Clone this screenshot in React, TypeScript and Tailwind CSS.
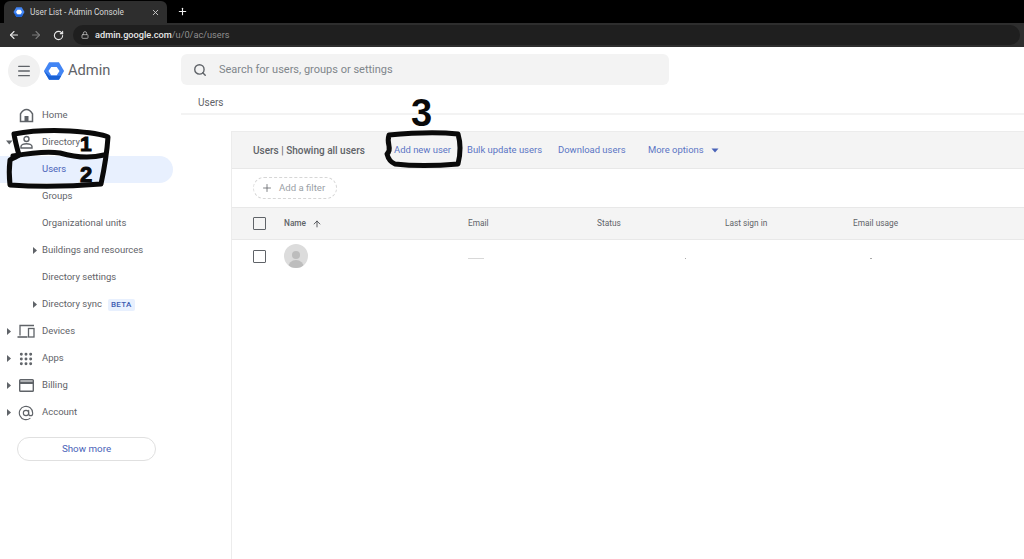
import React from "react";
import { ArrowLeft, ArrowRight, RotateCw, Lock, X, Plus, Menu, Search, ArrowUp, AtSign, Grip } from "lucide-react";

const Caret = ({ className = "", down = false }: { className?: string; down?: boolean }) => (
  <svg width="7" height="7" viewBox="0 0 7 7" className={className}>
    <path d={down ? "M0 1.5 H6.5 L3.25 5.5 Z" : "M1 0 L5 3.5 L1 7 Z"} fill="#5f6368" />
  </svg>
);

const Logo = ({ size }: { size: number }) => (
  <svg width={size} height={size} viewBox="0 0 24 24">
    <path d="M6.6 2.5h10.8l5.6 9.5-5.6 9.5H6.6L1 12z" fill="#4285f4" />
    <path d="M1 12l5.6 9.5h10.8l2.6-4.4H7z" fill="#1a62d6" />
    <path d="M9 7.5h6l3 4.5-3 4.5H9L6 12z" fill="#fff" />
  </svg>
);

const HomeIcon = () => (
  <svg width="15" height="15" viewBox="0 0 15 15" fill="none" stroke="#5f6368" strokeWidth="1.5">
    <path d="M1.5 13.5V5.8C3 3.2 5 1.5 7.5 1.5S12 3.2 13.5 5.8V13.5Z" />
    <rect x="5.5" y="8" width="4" height="5.5" fill="#5f6368" stroke="none" />
  </svg>
);

const PersonIcon = () => (
  <svg width="15" height="15" viewBox="0 0 15 15" fill="none" stroke="#5f6368" strokeWidth="1.4">
    <circle cx="7.5" cy="4" r="2.5" />
    <path d="M2 13V11.5C2 9.8 5 8.8 7.5 8.8S13 9.8 13 11.5V13Z" />
  </svg>
);

const Devices = () => (
  <svg width="18" height="15" viewBox="0 0 18 15" fill="none" stroke="#5f6368" strokeWidth="1.3">
    <path d="M3 11.5V1.5h14" />
    <path d="M0.5 13h10" strokeWidth="1.6" />
    <rect x="11.5" y="4.5" width="5.5" height="8.5" />
  </svg>
);

const Billing = () => (
  <svg width="15" height="13" viewBox="0 0 15 13" fill="none" stroke="#5f6368" strokeWidth="1.4">
    <rect x="0.7" y="0.7" width="13.6" height="11.6" rx="0.8" />
    <rect x="1" y="2.5" width="13" height="2.5" fill="#5f6368" stroke="none" />
  </svg>
);

type Row = { label: string; icon?: React.ReactNode; caret?: boolean; down?: boolean; sub?: boolean; active?: boolean; beta?: boolean };

const rows: Row[] = [
  { label: "Home", icon: <HomeIcon /> },
  { label: "Directory", icon: <PersonIcon />, caret: true, down: true },
  { label: "Users", sub: true, active: true },
  { label: "Groups", sub: true },
  { label: "Organizational units", sub: true },
  { label: "Buildings and resources", sub: true, caret: true },
  { label: "Directory settings", sub: true },
  { label: "Directory sync", sub: true, caret: true, beta: true },
  { label: "Devices", icon: <Devices />, caret: true },
  { label: "Apps", icon: <Grip size={16} strokeWidth={2.4} color="#5f6368" />, caret: true },
  { label: "Billing", icon: <Billing />, caret: true },
  { label: "Account", icon: <AtSign size={16} strokeWidth={1.7} color="#5f6368" />, caret: true },
];

const NavRow = ({ r }: { r: Row }) => (
  <div className={`relative flex h-[27px] items-center pl-[42px] text-[9.5px] ${r.active ? "mr-[8px] rounded-r-full bg-[#e8f0fe] text-[#4a63b8]" : "text-[#5f6368]"}`}>
    {r.caret && <Caret down={r.down} className={`absolute top-[10px] ${r.sub ? "left-[32px]" : "left-[6px]"}`} />}
    {r.icon && <span className="absolute left-[17px] top-0 flex h-[27px] w-[18px] items-center justify-center">{r.icon}</span>}
    <span>{r.label}</span>
    {r.beta && <span className="ml-[6px] rounded-[2px] bg-[#e8f0fe] px-[3px] py-[1px] text-[8px] font-medium leading-[10px] tracking-[0.3px] text-[#3c5bb0]">BETA</span>}
  </div>
);

const Box = () => <span className="block h-[13px] w-[13px] rounded-[1px] border-[1.5px] border-[#5f6368]" />;

const Scribbles = () => (
  <svg width="1024" height="559" viewBox="0 0 1024 559" fill="none" stroke="#0a0a0a" strokeWidth="5" strokeLinecap="round" strokeLinejoin="round" className="pointer-events-none absolute left-0 top-0">
    <path d="M14 134C30 131 50 130 70 131C85 132 100 133 108 137C107 152 104 170 101 184C75 186 40 187 10 185C9 176 9 168 10 160C14 157 18 157 19 155C17 148 15 140 14 134Z" />
    <path d="M13 156C30 153 48 151 60 153C74 157 88 159 104 155" />
    <path d="M389 135C410 133 440 132 458 134C461 144 460 156 458 164C435 166 412 166 395 164C390 162 388 158 387 154C389 152 390 150 389 146C388 142 388 138 389 135Z" />
  </svg>
);

const Digit = ({ n, className }: { n: string; className: string }) => (
  <span className={`pointer-events-none absolute font-['Liberation_Sans',sans-serif] font-bold text-[#0a0a0a] ${className}`}>{n}</span>
);

export default function App() {
  return (
    <div className="relative flex h-[559px] w-[1024px] flex-col overflow-hidden bg-white font-['Roboto',sans-serif]">
      {/* browser chrome */}
      <div className="flex h-[23px] shrink-0 items-end bg-black pl-[4px]">
        <div className="flex h-[22px] w-[163px] items-center rounded-t-[6px] bg-[#2e2e2e] pl-[9px] pr-[7px]">
          <Logo size={12} />
          <span className="ml-[5px] flex-1 whitespace-nowrap text-[8.2px] text-[#d8d8d8]">User List - Admin Console</span>
          <X size={9} strokeWidth={2.4} color="#d0d0d0" />
        </div>
        <Plus size={11} strokeWidth={2.4} color="#f0f0f0" className="mb-[6px] ml-[10px]" />
      </div>
      <div className="flex h-[24px] shrink-0 items-center bg-[#2e2e2e] pl-[8px] pr-[4px]">
        <ArrowLeft size={12} strokeWidth={2.2} color="#e8e8e8" />
        <ArrowRight size={12} strokeWidth={2.2} color="#7a7a7a" className="ml-[10px]" />
        <RotateCw size={11} strokeWidth={2.4} color="#e8e8e8" className="ml-[11px]" />
        <div className="ml-[9px] flex h-[20px] flex-1 items-center rounded-full bg-[#1f1f1f] pl-[8px]">
          <Lock size={8} strokeWidth={2.4} color="#bdbdbd" />
          <span className="ml-[6px] text-[9.2px] font-medium text-[#e8e8e8]">admin.google.com</span>
          <span className="text-[9.2px] text-[#8f8f8f]">/u/0/ac/users</span>
        </div>
      </div>

      <div className="flex min-h-0 flex-1">
        {/* sidebar */}
        <div className="w-[181px] shrink-0">
          <div className="flex h-[47px] items-center pl-[8px]">
            <div className="flex h-[32px] w-[32px] items-center justify-center rounded-full bg-[#f1f1f1]">
              <Menu size={16} strokeWidth={2} color="#5f6368" />
            </div>
            <span className="ml-[3px]"><Logo size={22} /></span>
            <span className="ml-[3px] text-[14.7px] text-[#5f6368]">Admin</span>
          </div>
          <div className="mt-[8px]">
            {rows.map((r) => (
              <NavRow key={r.label} r={r} />
            ))}
          </div>
          <div className="ml-[17px] mt-[11px] flex h-[24px] w-[139px] items-center justify-center rounded-full border border-[#e0e0e0] text-[9.8px] text-[#4a63b8]">
            Show more
          </div>
        </div>

        {/* main */}
        <div className="flex min-w-0 flex-1 flex-col">
          <div className="flex h-[44px] shrink-0 items-start pt-[7px]">
            <div className="flex h-[31px] w-[488px] items-center rounded-[6px] bg-[#f3f3f3] pl-[12px]">
              <Search size={14} strokeWidth={2.4} color="#5f6368" />
              <span className="ml-[12px] mt-[2px] text-[11px] text-[#80868b]">Search for users, groups or settings</span>
            </div>
          </div>
          <div className="flex h-[24px] shrink-0 items-center border-b-2 border-[#f3f3f3] pl-[17px] text-[10px] text-[#5f6368]">Users</div>

          <div className="flex min-h-0 flex-1 flex-col pl-[50px] pt-[16px]">
            <div className="flex-1 border-l border-t border-[#ececec]">
              <div className="flex h-[37px] items-center border-b border-[#e8e8e8] bg-[#f4f4f4] pl-[21px] text-[9.45px] text-[#5b74c4]">
                <span className="w-[141px] text-[10px] font-medium text-[#5f6368]">Users <span className="font-normal">|</span> Showing all users</span>
                <span className="w-[73px]">Add new user</span>
                <span className="w-[91px]">Bulk update users</span>
                <span className="w-[90px]">Download users</span>
                <span>More options</span>
                <svg width="8" height="5" viewBox="0 0 8 5" className="ml-[7px]"><path d="M0.5 0.5h7L4 4.5z" fill="#4a63b8" /></svg>
              </div>
              <div className="flex h-[38px] items-center pl-[21px]">
                <div className="flex h-[22px] w-[84px] items-center rounded-full border border-dashed border-[#d6d6d6] pl-[7px] text-[9.6px] text-[#9aa0a6]">
                  <Plus size={12} strokeWidth={1.6} color="#5f6368" />
                  <span className="ml-[6px]">Add a filter</span>
                </div>
              </div>
              <div className="flex h-[33px] items-center border-y border-[#e8e8e8] bg-[#f4f4f4] text-[8.3px] text-[#5f6368]">
                <span className="ml-[21px] w-[31px]"><Box /></span>
                <span className="font-medium">Name</span>
                <ArrowUp size={10} strokeWidth={2} color="#3c4043" className="ml-[6px]" />
                <span className="ml-[146px] w-[129px]">Email</span>
                <span className="w-[128px]">Status</span>
                <span className="w-[128px]">Last sign in</span>
                <span>Email usage</span>
              </div>
              <div className="flex h-[32px] items-center">
                <span className="ml-[21px] w-[31px]"><Box /></span>
                <span className="flex h-[24px] w-[24px] flex-col items-center justify-end overflow-hidden rounded-full bg-[#dcdcdc]">
                  <span className="h-[8px] w-[8px] rounded-full bg-[#bdbdbd]" />
                  <span className="mt-[1px] h-[8px] w-[16px] rounded-t-full bg-[#bdbdbd]" />
                </span>
                <span className="ml-[160px] mt-[5px] h-px w-[16px] bg-[#d8d8d8]" />
                <span className="ml-[201px] mt-[5px] h-px w-px bg-[#aaa]" />
                <span className="ml-[184px] mt-[5px] h-px w-[2px] bg-[#aaa]" />
              </div>
            </div>
          </div>
        </div>
      </div>

      <Scribbles />
      <Digit n="1" className="left-[80px] top-[132px] text-[21px] leading-[24px] [-webkit-text-stroke:1px_#0a0a0a]" />
      <Digit n="2" className="left-[80px] top-[162px] text-[22px] leading-[26px] [-webkit-text-stroke:1px_#0a0a0a]" />
      <Digit n="3" className="left-[411px] top-[94px] text-[38px] leading-[38px]" />
    </div>
  );
}
